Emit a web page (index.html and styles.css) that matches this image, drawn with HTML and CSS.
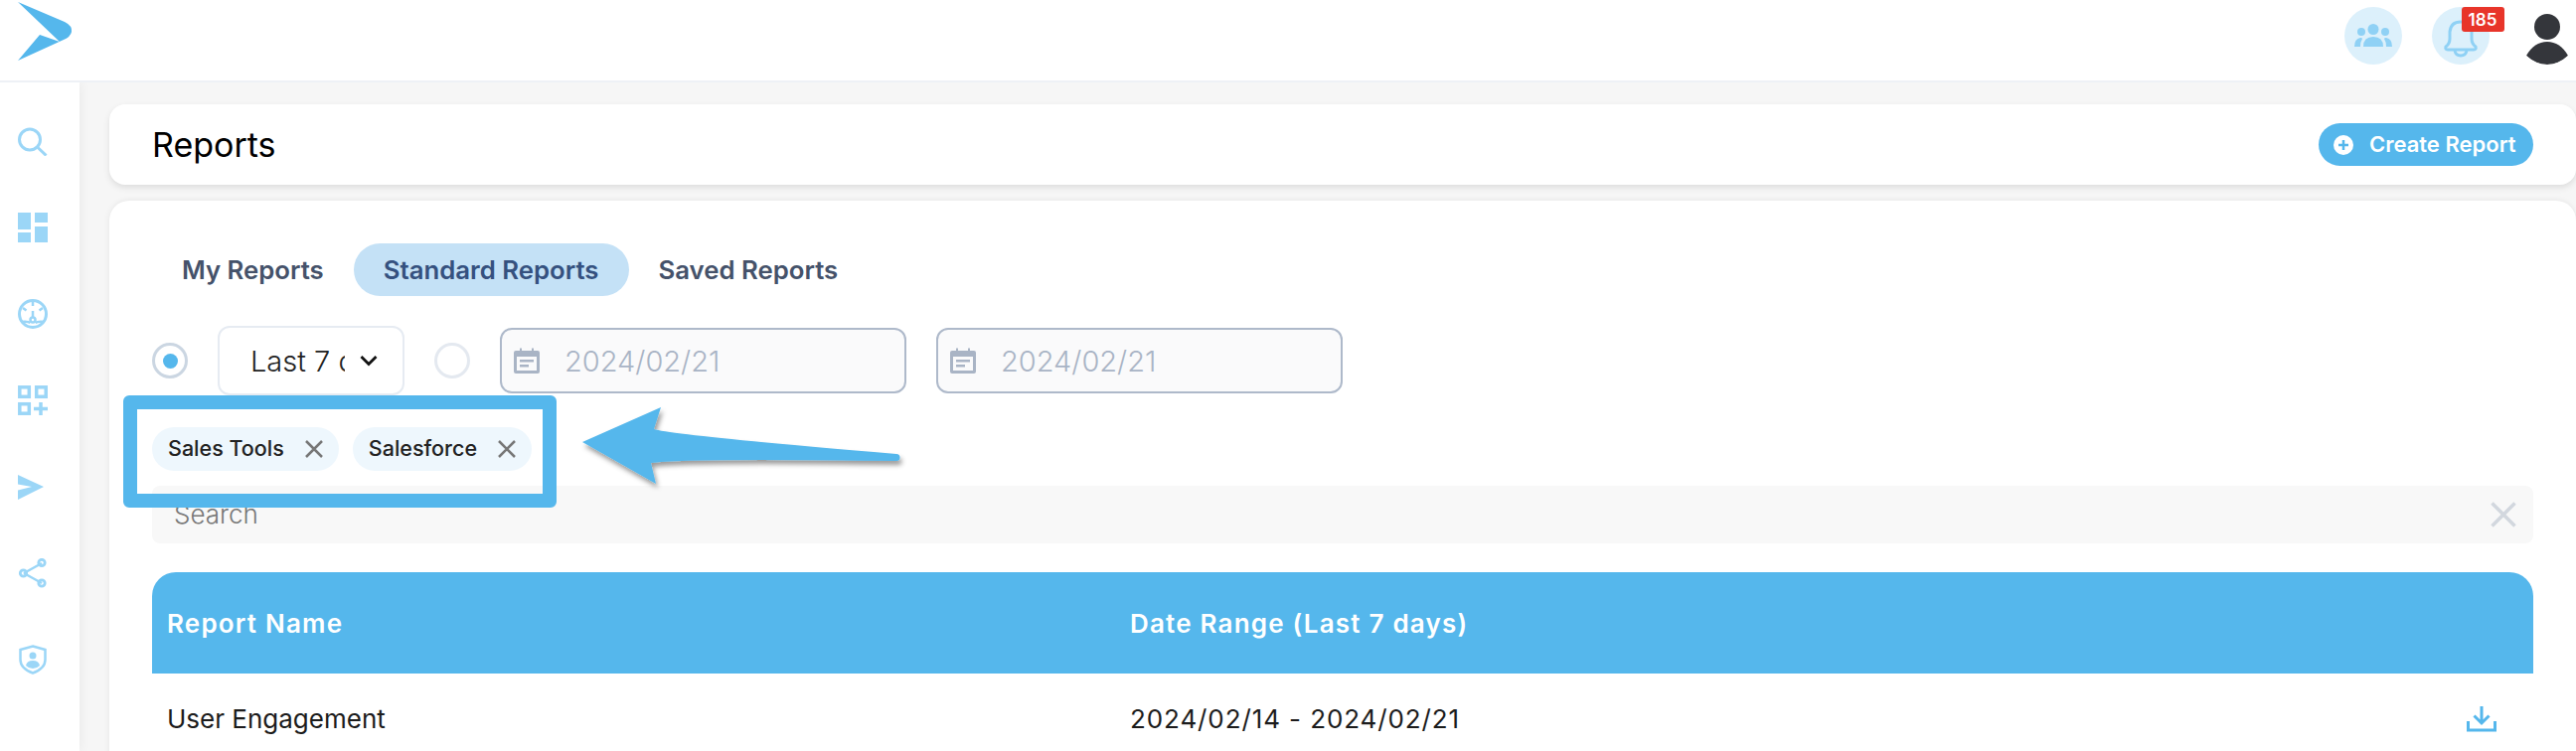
FILE: index.html
```html
<!DOCTYPE html>
<html lang="en">
<head>
<meta charset="utf-8">
<title>Reports</title>
<link rel="stylesheet" href="styles.css">
</head>
<body>
<div class="app">
  <header class="topbar">
    <svg class="logo" viewBox="0 0 56 60"><path d="M1 1 L48 21 Q56 25 55 31 Q54 36 47 39 L1 60 L23 34 L43 41 Z"/></svg>
    <div class="top-actions">
      <span class="round-btn">
        <svg class="i-group" viewBox="0 0 38 24"><circle cx="19" cy="5.5" r="5.5"/><circle cx="7" cy="8" r="4"/><circle cx="31" cy="8" r="4"/><path d="M9 23 Q9 13 19 13 Q29 13 29 23 Z"/><path d="M0 23 Q0 15 6 14 Q8 14 8 15 Q6 18 6 23 Z"/><path d="M38 23 Q38 15 32 14 Q30 14 30 15 Q32 18 32 23 Z"/></svg>
      </span>
      <span class="round-btn bell-btn">
        <svg class="i-bell" viewBox="0 0 36 40"><path d="M3 28 Q7 25 7 20 L7 13 Q8 3 18 3 Q28 3 29 13 L29 20 Q29 25 33 28 Q34 31 31 31 L5 31 Q2 31 3 28 Z"/><path d="M12 32 Q13 37 18 37 Q23 37 24 32"/></svg>
        <span class="badge">185</span>
      </span>
      <span class="avatar">
        <svg viewBox="0 0 58 58"><circle cx="29" cy="20" r="13"/><path d="M8 49 Q16 35 29 35 Q42 35 50 49 Q40 58 29 58 Q18 58 8 49 Z"/></svg>
      </span>
    </div>
  </header>
  <div class="body">
    <nav class="sidebar">
      <svg class="nav-icon" viewBox="0 0 30 30"><circle class="ln" cx="12" cy="13.500" r="10.5"/><path class="ln" d="M20 21.500 L28.5 29.500"/></svg>
      <svg class="nav-icon" viewBox="0 0 30 30"><rect x="0" y="0" width="13" height="17"/><rect x="17" y="0" width="13" height="10"/><rect x="17" y="14" width="13" height="16"/><rect x="0" y="20" width="13" height="10"/></svg>
      <svg class="nav-icon" viewBox="0 0 30 30"><circle class="ln" cx="15" cy="15" r="13.5"/><path class="ln mid" d="M15 3 V7 M5 9 L8.500 11.500 M25 9 L21.500 11.500 M3 23 Q10 22 12.500 24 M27 23 Q20 22 17.500 24 M15 12 V19"/><circle class="ln mid" cx="15" cy="21" r="2.500"/></svg>
      <svg class="nav-icon" viewBox="0 0 30 30"><rect class="ln heavy" x="1.800" y="1.800" width="9.500" height="9.500"/><rect class="ln heavy" x="18.700" y="1.800" width="9.500" height="9.500"/><rect class="ln heavy" x="1.800" y="18.700" width="9.500" height="9.500"/><path class="ln heavy" d="M16 23.500 H30 M23 17 V30"/></svg>
      <svg class="nav-icon" viewBox="0 0 30 30"><path d="M0 3 L26 15 L0 28 L0 18.500 L14 15 L0 12.500 Z"/></svg>
      <svg class="nav-icon" viewBox="0 0 30 30"><path class="ln mid" d="M6 15 L24 5 M6 15 L24 25"/><circle class="ln dot" cx="5.500" cy="15" r="3.200"/><circle class="ln dot" cx="24" cy="4.500" r="3.200"/><circle class="ln dot" cx="24" cy="25" r="3.200"/></svg>
      <svg class="nav-icon" viewBox="0 0 30 30"><path class="ln mid" d="M15 1.500 L27.500 5 V15 Q27.500 24 15 28.500 Q2.500 24 2.500 15 V5 Z"/><circle cx="15" cy="11" r="3.500"/><path d="M8 21 Q9 16 15 16 Q21 16 22 21 Q19 24 15 24 Q11 24 8 21 Z"/></svg>
    </nav>
    <main class="main">
      <section class="title-card">
        <h1 class="page-title">Reports</h1>
        <button class="create-btn">
          <svg class="plus" viewBox="0 0 20 20"><circle cx="10" cy="10" r="10"/><path d="M10 5 V15 M5 10 H15"/></svg>
          <span class="create-label">Create Report</span>
        </button>
      </section>
      <section class="content-card">
        <div class="tabs">
          <span class="tab">My Reports</span>
          <span class="tab active">Standard Reports</span>
          <span class="tab">Saved Reports</span>
        </div>
        <div class="filters">
          <span class="radio checked"></span>
          <span class="select"><span class="select-text">Last 7 days</span>
            <svg class="chev" viewBox="0 0 18 12"><path d="M1.500 2 L9 9.500 L16.500 2"/></svg>
          </span>
          <span class="radio"></span>
          <span class="date">
            <svg class="cal" viewBox="0 0 26 26"><path d="M2 3 H6 V0.500 H8 V3 H18 V0.500 H20 V3 H24 Q26 3 26 5 V24 Q26 26 24 26 H2 Q0 26 0 24 V5 Q0 3 2 3 Z M3 9 V23 H23 V9 Z M6 12 H20 V14.500 H6 Z M6 17 H15 V19.500 H6 Z" fill-rule="evenodd"/></svg>
            2024/02/21
          </span>
          <span class="date">
            <svg class="cal" viewBox="0 0 26 26"><path d="M2 3 H6 V0.500 H8 V3 H18 V0.500 H20 V3 H24 Q26 3 26 5 V24 Q26 26 24 26 H2 Q0 26 0 24 V5 Q0 3 2 3 Z M3 9 V23 H23 V9 Z M6 12 H20 V14.500 H6 Z M6 17 H15 V19.500 H6 Z" fill-rule="evenodd"/></svg>
            2024/02/21
          </span>
        </div>
        <div class="chips">
          <span class="chip"><span class="chip-label">Sales Tools</span><svg class="chip-x" viewBox="0 0 18 18"><path d="M1 1 L17 17 M17 1 L1 17"/></svg></span>
          <span class="chip"><span class="chip-label">Salesforce</span><svg class="chip-x" viewBox="0 0 18 18"><path d="M1 1 L17 17 M17 1 L1 17"/></svg></span>
        </div>
        <div class="search">
          <span class="search-label">Search</span>
          <svg class="search-x" viewBox="0 0 26 26"><path d="M1.500 1.500 L24.500 24.500 M24.500 1.500 L1.500 24.500"/></svg>
        </div>
        <div class="table">
          <div class="thead">
            <span>Report Name</span>
            <span>Date Range (Last 7 days)</span>
          </div>
          <div class="trow">
            <span class="cell">User Engagement</span>
            <span class="cell range">2024/02/14 - 2024/02/21</span>
            <svg class="dl" viewBox="0 0 30 26"><path class="dl-l" d="M15 0 V16 M7.500 9.500 L15 17 L22.500 9.500 M1.500 15 V24 H28.500 V15"/></svg>
          </div>
        </div>
        <div class="callout-box"></div>
        <svg class="callout-arrow" viewBox="0 0 340 100"><defs><filter id="sh" x="-10%" y="-20%" width="120%" height="150%"><feDropShadow dx="2" dy="4" stdDeviation="2.500" flood-color="#000" flood-opacity="0.4"/></filter></defs><path filter="url(#sh)" d="M10 40 L89 5 L82 27 Q100 33 326 52 A3.500 3.500 0 0 1 326 59 Q110 56 79 61 L84 82 Z"/></svg>
      </section>
    </main>
  </div>
</div>
</body>
</html>
```
FILE: styles.css
```css
* { box-sizing: border-box; }
html, body { margin: 0; height: 100%; overflow: hidden; }
body { font-family: Inter, "Liberation Sans", sans-serif; color: #111; background: #f6f6f6; }
.app { height: 100vh; display: flex; flex-direction: column; overflow: hidden; }

.topbar { height: 83px; flex: none; background: #fff; border-bottom: 2px solid #eef1f6; display: flex; align-items: flex-start; justify-content: space-between; position: relative; z-index: 2; }
.logo { width: 56px; height: 60px; margin: 1px 0 0 17px; fill: #55b7ec; }
.top-actions { display: flex; margin-top: 7px; }
.round-btn { width: 58px; height: 58px; border-radius: 50%; background: #dcf0fb; display: flex; align-items: center; justify-content: center; position: relative; margin-right: 29.5px; }
.i-group { width: 38px; height: 24px; fill: #8fd1f5; }
.i-bell { width: 36px; height: 40px; fill: none; stroke: #8fd1f5; stroke-width: 3; margin-top: 6px; }
.badge { position: absolute; left: 30px; top: 0; width: 43px; height: 25px; border-radius: 3px; background: #e8352a; color: #fff; font-size: 17px; font-weight: 600; display: flex; align-items: center; justify-content: center; }
.avatar { width: 58px; height: 58px; border-radius: 50%; background: #fff; overflow: hidden; }
.avatar svg { display: block; width: 58px; height: 58px; fill: #34363b; }

.body { flex: 1; display: flex; min-height: 0; }
.sidebar { width: 80px; flex: none; background: #fff; box-shadow: 2px 0 10px rgba(0,0,0,.05); padding-top: 44px; display: flex; flex-direction: column; align-items: flex-start; gap: 57px; }
.nav-icon { width: 30px; height: 30px; margin-left: 18px; flex: none; fill: #9bd6f7; }
.ln { fill: none; stroke: #9bd6f7; stroke-width: 3; }
.mid { stroke-width: 2.5; }
.heavy { stroke-width: 3.5; }
.dot { stroke-width: 2.8; }

.main { flex: 1; min-width: 0; padding: 22px 0 0 30px; display: flex; flex-direction: column; gap: 16px; }
.title-card { height: 81px; flex: none; background: #fff; border-radius: 16px; box-shadow: 0 3px 6px rgba(0,0,0,.1); padding: 0 43px; display: flex; align-items: center; justify-content: space-between; }
.page-title { margin: 0; font-size: 34px; font-weight: 400; color: #000; }
.create-btn { width: 216px; height: 43px; border: 0; border-radius: 22px; background: #55b7ec; color: #fff; font: 600 22px Inter, sans-serif; display: flex; align-items: center; gap: 16px; padding: 0 0 0 15px; white-space: nowrap; }
.create-label { margin-bottom: 2px; }
.plus { width: 20px; height: 20px; fill: #fff; stroke: none; flex: none; }
.plus path { stroke: #55b7ec; stroke-width: 2.5; }

.content-card { flex: 1; background: #fff; border-radius: 20px 20px 0 0; box-shadow: 0 0 6px rgba(0,0,0,.08); padding: 43px 43px 0; position: relative; }
.tabs { display: flex; height: 53px; align-items: center; }
.tab { height: 53px; padding: 0 30px; border-radius: 27px; font-size: 25.75px; font-weight: 600; color: #45526a; display: flex; align-items: center; }
.tab.active { background: #c4e1f6; color: #35517f; }

.filters { display: flex; align-items: center; gap: 30px; margin-top: 30px; height: 70px; }
.radio { width: 36px; height: 36px; border-radius: 50%; border: 3px solid #e4e9f0; flex: none; display: flex; align-items: center; justify-content: center; }
.radio.checked { border-color: #cbd6e2; }
.radio.checked::after { content: ""; width: 15px; height: 15px; border-radius: 50%; background: #55b7ec; }
.select { width: 188px; height: 70px; border: 2px solid #e6ebf2; border-radius: 12px; display: flex; align-items: center; padding-left: 31px; font-size: 29px; font-weight: 300; color: #222; }
.select-text { width: 95px; overflow: hidden; white-space: nowrap; flex: none; }
.chev { width: 18px; height: 12px; margin-left: 15px; fill: none; stroke: #111; stroke-width: 2.8; flex: none; }
.date { width: 409px; height: 66px; border: 2px solid #aeb9ca; border-radius: 12px; background: #fafafb; display: flex; align-items: center; padding-left: 12px; gap: 25px; font-size: 29px; font-weight: 300; color: #a9b4c5; flex: none; }
.cal { width: 26px; height: 26px; fill: #a9b4c5; flex: none; }

.chips { display: flex; gap: 14px; margin-top: 32px; height: 44px; }
.chip { height: 44px; border-radius: 22px; background: #eef7fd; font-size: 21.5px; font-weight: 500; color: #222; display: flex; align-items: center; padding: 0 16px; gap: 21px; }
.chip-label { margin-bottom: 2px; }
.chip-x { width: 18px; height: 18px; fill: none; stroke: #777; stroke-width: 2.5; }

.search { margin-top: 15px; height: 58px; border-radius: 8px; background: #f8f8f8; display: flex; align-items: center; justify-content: space-between; padding: 0 17px 0 22px; font-size: 26px; font-weight: 300; color: #777; }
.search-label { margin-bottom: 2px; }
.search-x { width: 26px; height: 26px; fill: none; stroke: #d2d7de; stroke-width: 3.5; }

.table { margin-top: 29px; }
.thead { height: 102px; background: #55b7ec; border-radius: 24px 24px 0 0; color: #fff; font-weight: 600; font-size: 26px; letter-spacing: 1.2px; display: grid; grid-template-columns: 969px 1fr; align-items: center; padding: 0 15px; }
.trow { height: 92px; display: grid; grid-template-columns: 969px 1fr auto; align-items: center; padding: 0 37px 0 15px; font-size: 26px; color: #1c1c1c; }
.cell { margin-bottom: 2px; }
.range { letter-spacing: .9px; }
.dl { width: 30px; height: 26px; }
.dl-l { fill: none; stroke: #55b7ec; stroke-width: 3; }

.callout-box { position: absolute; left: 14px; top: 196px; width: 436px; height: 113px; border: 14px solid #55b7ec; border-radius: 6px; }
.callout-arrow { position: absolute; left: 466px; top: 203px; width: 340px; height: 100px; fill: #55b7ec; }
```
